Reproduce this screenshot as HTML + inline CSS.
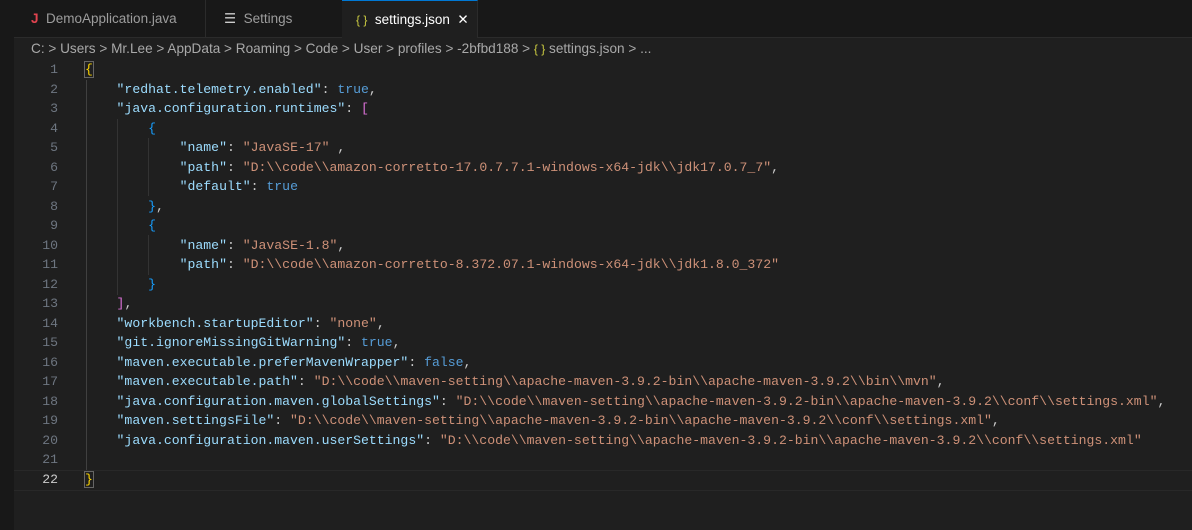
<!DOCTYPE html><html><head><style>
html,body{margin:0;width:1192px;height:530px;overflow:hidden}
body{background:#1f1f1f;font-family:"Liberation Sans",sans-serif;position:relative}
.strip{position:absolute;left:0;top:0;width:14px;height:530px;background:#181818}
.tabs{position:absolute;left:14px;top:0;width:1178px;height:37px;background:#181818;border-bottom:1px solid #2b2b2b}
.tab{position:absolute;top:0;height:37px;line-height:37px;font-size:13.5px;color:#9d9d9d;border-right:1px solid #2b2b2b}
.tab.act{background:#1f1f1f;color:#fff;border-top:1px solid #0078d4;height:37px;top:0}
.bc{position:absolute;left:31px;top:40px;font-size:13.6px;color:#a9a9a9;line-height:18px;white-space:pre}
.code{position:absolute;left:0;top:60px;width:1192px;font-family:"Liberation Mono",monospace;font-size:13.15px}
.l{height:19.52px;line-height:19.52px;position:relative}
.n{position:absolute;left:0;width:58px;text-align:right;color:#6e7681}
.t{position:absolute;left:85px;color:#ccc;white-space:pre}
.k{color:#9cdcfe}.s{color:#ce9178}.b{color:#569cd6}.y{color:#ffd700}.p{color:#da70d6}.c{color:#179fff}
.g{position:absolute;width:1px;background:#404040}
</style></head><body>
<div class="strip"></div>
<div class="tabs">
<div class="tab" style="left:0;width:191px"><span style="color:#e0434f;font-weight:bold;margin-left:17px">J</span>&nbsp; DemoApplication.java</div>
<div class="tab" style="left:191px;width:137px"><span style="margin-left:19px;color:#ccc">☰</span>&nbsp; Settings</div>
<div class="tab act" style="left:328px;width:135px"><span style="margin-left:14px;color:#cbcb41;font-size:12px">{ }</span>&nbsp; settings.json&nbsp;&nbsp;✕</div>
</div>
<div class="bc">C: &gt; Users &gt; Mr.Lee &gt; AppData &gt; Roaming &gt; Code &gt; User &gt; profiles &gt; -2bfbd188 &gt; <span style="color:#cbcb41;font-size:12px">{ }</span> settings.json &gt; ...</div>
<div class="g" style="left:86px;top:80px;height:390px"></div>
<div class="g" style="left:117px;top:119px;height:176px;background:#333"></div>
<div class="g" style="left:148px;top:138px;height:58px;background:#333"></div>
<div class="g" style="left:148px;top:235px;height:40px;background:#333"></div>
<div style="position:absolute;left:14px;top:470px;width:1178px;height:19px;border-top:1px solid #282828;border-bottom:1px solid #282828"></div>
<div class="code"><div class="l"><span class="n">1</span><span class="t"><span class="y" style="outline:1px solid #666">{</span></span></div><div class="l"><span class="n">2</span><span class="t">    <span class="k">"redhat.telemetry.enabled"</span>: <span class="b">true</span>,</span></div><div class="l"><span class="n">3</span><span class="t">    <span class="k">"java.configuration.runtimes"</span>: <span class="p">[</span></span></div><div class="l"><span class="n">4</span><span class="t">        <span class="c">{</span></span></div><div class="l"><span class="n">5</span><span class="t">            <span class="k">"name"</span>: <span class="s">"JavaSE-17"</span> ,</span></div><div class="l"><span class="n">6</span><span class="t">            <span class="k">"path"</span>: <span class="s">"D:\\code\\amazon-corretto-17.0.7.7.1-windows-x64-jdk\\jdk17.0.7_7"</span>,</span></div><div class="l"><span class="n">7</span><span class="t">            <span class="k">"default"</span>: <span class="b">true</span></span></div><div class="l"><span class="n">8</span><span class="t">        <span class="c">}</span>,</span></div><div class="l"><span class="n">9</span><span class="t">        <span class="c">{</span></span></div><div class="l"><span class="n">10</span><span class="t">            <span class="k">"name"</span>: <span class="s">"JavaSE-1.8"</span>,</span></div><div class="l"><span class="n">11</span><span class="t">            <span class="k">"path"</span>: <span class="s">"D:\\code\\amazon-corretto-8.372.07.1-windows-x64-jdk\\jdk1.8.0_372"</span></span></div><div class="l"><span class="n">12</span><span class="t">        <span class="c">}</span></span></div><div class="l"><span class="n">13</span><span class="t">    <span class="p">]</span>,</span></div><div class="l"><span class="n">14</span><span class="t">    <span class="k">"workbench.startupEditor"</span>: <span class="s">"none"</span>,</span></div><div class="l"><span class="n">15</span><span class="t">    <span class="k">"git.ignoreMissingGitWarning"</span>: <span class="b">true</span>,</span></div><div class="l"><span class="n">16</span><span class="t">    <span class="k">"maven.executable.preferMavenWrapper"</span>: <span class="b">false</span>,</span></div><div class="l"><span class="n">17</span><span class="t">    <span class="k">"maven.executable.path"</span>: <span class="s">"D:\\code\\maven-setting\\apache-maven-3.9.2-bin\\apache-maven-3.9.2\\bin\\mvn"</span>,</span></div><div class="l"><span class="n">18</span><span class="t">    <span class="k">"java.configuration.maven.globalSettings"</span>: <span class="s">"D:\\code\\maven-setting\\apache-maven-3.9.2-bin\\apache-maven-3.9.2\\conf\\settings.xml"</span>,</span></div><div class="l"><span class="n">19</span><span class="t">    <span class="k">"maven.settingsFile"</span>: <span class="s">"D:\\code\\maven-setting\\apache-maven-3.9.2-bin\\apache-maven-3.9.2\\conf\\settings.xml"</span>,</span></div><div class="l"><span class="n">20</span><span class="t">    <span class="k">"java.configuration.maven.userSettings"</span>: <span class="s">"D:\\code\\maven-setting\\apache-maven-3.9.2-bin\\apache-maven-3.9.2\\conf\\settings.xml"</span></span></div><div class="l"><span class="n">21</span><span class="t"></span></div><div class="l"><span class="n" style="color:#ccc">22</span><span class="t"><span class="y" style="outline:1px solid #666">}</span></span></div></div>
</body></html>
